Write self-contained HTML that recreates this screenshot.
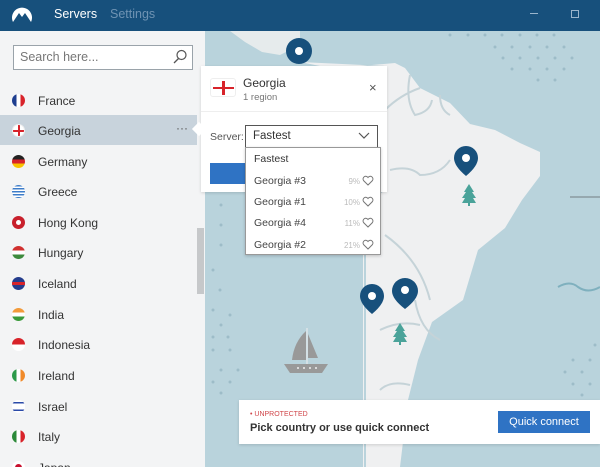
<!DOCTYPE html>
<html><head><meta charset="utf-8"><style>
*{margin:0;padding:0;box-sizing:border-box}
html,body{width:600px;height:467px;overflow:hidden}
body{font-family:"Liberation Sans",sans-serif;background:#b9d3dc;position:relative}
.hdr{position:absolute;left:0;top:0;width:600px;height:31px;background:#17507c}
.side{position:absolute;left:0;top:31px;width:205px;height:436px;background:#f3f4f5}
.search{position:absolute;left:13px;top:45px;width:180px;height:25px;border:1px solid #9aa3aa;background:#fff;font-size:12.5px;color:#777;padding:4px 6px}
.row{position:absolute;left:0;width:197px;height:30px;font-size:12px;color:#333}
.row span{position:absolute;left:38px;top:9px}
.flag{position:absolute;left:12px;top:9px;width:13px;height:13px;border-radius:50%;overflow:hidden}
.sel{background:#c8d3dc}
.abs{position:absolute}
</style></head><body>
<svg class="abs" style="left:205px;top:31px" width="395" height="436" viewBox="205 31 395 436">
<rect x="205" y="31" width="395" height="436" fill="#b9d3dc"/>
<path d="M300 62 L330 68 L360 66 L395 63 L405 68 L420 88 L450 103 L470 124 L495 130 L520 143 L540 152 L540 176 L522 200 L505 228 L478 250 L463 300 L432 322 L418 360 L408 400 L400 467 L363 467 L363 240 L372 200 L385 190 L385 66 Z" fill="#eff0f1"/>
<path d="M230 31 L300 31 L300 45 L280 55 L262 52 L245 42 Z" fill="#e6ebec"/>
<path d="M365 200 L365 467" stroke="#b9d3dc" stroke-width="2"/>
<path d="M385 110 Q400 95 420 88 M410 75 Q405 100 415 115 Q430 112 432 100 M440 95 Q440 110 450 115 M390 170 Q410 165 420 175 Q440 175 450 160 M385 235 Q420 260 430 300 M415 300 Q420 330 440 340 M380 330 Q400 320 420 325 M380 390 Q390 380 410 385" stroke="#c5d3d8" stroke-width="2" fill="none"/>
<g fill="#9dbcc8">
<circle cx="450" cy="35" r="1.5"/><circle cx="468" cy="35" r="1.5"/><circle cx="485" cy="35" r="1.5"/><circle cx="502" cy="35" r="1.5"/><circle cx="520" cy="35" r="1.5"/><circle cx="537" cy="35" r="1.5"/><circle cx="554" cy="35" r="1.5"/>
<circle cx="495" cy="47" r="1.5"/><circle cx="512" cy="47" r="1.5"/><circle cx="530" cy="47" r="1.5"/><circle cx="547" cy="47" r="1.5"/><circle cx="564" cy="47" r="1.5"/>
<circle cx="503" cy="58" r="1.5"/><circle cx="520" cy="58" r="1.5"/><circle cx="538" cy="58" r="1.5"/><circle cx="555" cy="58" r="1.5"/><circle cx="572" cy="58" r="1.5"/>
<circle cx="512" cy="69" r="1.5"/><circle cx="530" cy="69" r="1.5"/><circle cx="547" cy="69" r="1.5"/><circle cx="564" cy="69" r="1.5"/>
<circle cx="538" cy="80" r="1.5"/><circle cx="555" cy="80" r="1.5"/>
<circle cx="213" cy="270" r="1.5"/><circle cx="220" cy="290" r="1.5"/><circle cx="213" cy="310" r="1.5"/><circle cx="221" cy="325" r="1.5"/><circle cx="230" cy="315" r="1.5"/><circle cx="213" cy="337" r="1.5"/><circle cx="228" cy="337" r="1.5"/><circle cx="213" cy="350" r="1.5"/><circle cx="230" cy="350" r="1.5"/><circle cx="221" cy="370" r="1.5"/><circle cx="238" cy="370" r="1.5"/><circle cx="213" cy="382" r="1.5"/><circle cx="230" cy="382" r="1.5"/><circle cx="221" cy="393" r="1.5"/><circle cx="221" cy="205" r="1.5"/><circle cx="221" cy="225" r="1.5"/><circle cx="221" cy="245" r="1.5"/>
<circle cx="573" cy="360" r="1.5"/><circle cx="590" cy="360" r="1.5"/><circle cx="565" cy="372" r="1.5"/><circle cx="582" cy="372" r="1.5"/><circle cx="573" cy="384" r="1.5"/><circle cx="590" cy="384" r="1.5"/><circle cx="582" cy="395" r="1.5"/><circle cx="595" cy="345" r="1.5"/>
</g>
<path d="M558 287 Q570 280 578 287 Q588 294 600 287" stroke="#7fb0be" stroke-width="2" fill="none"/>
<path d="M570 197 L600 197" stroke="#8a9aa0" stroke-width="1.5"/>
<circle cx="299" cy="51" r="13" fill="#17507c"/>
<circle cx="299" cy="51" r="4" fill="#fff"/>
<path d="M466 146 a12 12 0 0 1 12 12 q0 8 -12 18 q-12 -10 -12 -18 a12 12 0 0 1 12 -12z" fill="#17507c"/><circle cx="466" cy="158" r="4" fill="#fff"/>
<path d="M372 284 a12 12 0 0 1 12 12 q0 8 -12 18 q-12 -10 -12 -18 a12 12 0 0 1 12 -12z" fill="#17507c"/><circle cx="372" cy="296" r="4" fill="#fff"/>
<path d="M405 278 a13 13 0 0 1 13 13 q0 8 -13 18 q-13 -10 -13 -18 a13 13 0 0 1 13 -13z" fill="#17507c"/><circle cx="405" cy="290" r="4" fill="#fff"/>
<path d="M469 184 l5 8 h-2 l4 6 h-3 l3 5 h-14 l3 -5 h-3 l4 -6 h-2z M468 203 h2 v3 h-2z" fill="#4aa39a"/>
<path d="M400 323 l5 8 h-2 l4 6 h-3 l3 5 h-14 l3 -5 h-3 l4 -6 h-2z M399 342 h2 v3 h-2z" fill="#4aa39a"/>
<path d="M306 331 L306 360 L292 360 Q294 342 306 331z" fill="#999"/>
<path d="M308 334 L318 358 L308 358z" fill="#999"/>
<path d="M307 328 L307 364" stroke="#eee" stroke-width="1"/>
<path d="M284 364 L328 364 L322 373 L290 373z" fill="#999"/>
<g fill="#eee"><circle cx="298" cy="368" r="1"/><circle cx="304" cy="368" r="1"/><circle cx="310" cy="368" r="1"/><circle cx="316" cy="368" r="1"/></g>
</svg>
<div class="hdr">
<svg class="abs" style="left:11px;top:6px" width="22" height="18" viewBox="0 0 22 18"><path d="M2 16 A10 10 0 1 1 20 16 L14 7 L11 11 L8 7 Z" fill="#fff"/></svg>
<div class="abs" style="left:54px;top:7px;color:#fff;font-size:12.5px">Servers</div>
<div class="abs" style="left:110px;top:7px;color:#6f93b3;font-size:12.5px">Settings</div>
<div class="abs" style="left:530px;top:13px;width:8px;height:1px;background:#9ab5cc"></div>
<div class="abs" style="left:571px;top:10px;width:8px;height:8px;border:1px solid #9ab5cc"></div>
</div>
<div class="side"></div>
<div class="search">Search here...</div>
<svg class="abs" style="left:172px;top:49px" width="16" height="16" viewBox="0 0 16 16"><circle cx="9.5" cy="6" r="4.5" stroke="#555" stroke-width="1.2" fill="none"/><path d="M6.5 9.5 L2 14" stroke="#555" stroke-width="1.3"/></svg>
<div class="row" style="top:85px"><i class="flag" style="background:linear-gradient(90deg,#1e3e8f 33%,#fff 33% 66%,#d8232a 66%)"></i><span>France</span></div>
<div class="row sel" style="top:115px;width:197px"><i class="flag" style="background:#fff;border:1px solid #eee"><b style="position:absolute;left:5px;top:0;width:2px;height:13px;background:#d8232a"></b><b style="position:absolute;left:0;top:5px;width:13px;height:2px;background:#d8232a"></b></i><span>Georgia</span><b style="position:absolute;left:176px;top:6px;font-weight:normal;color:#555">···</b></div>
<div class="row" style="top:146px"><i class="flag" style="background:linear-gradient(#222 33%,#d8232a 33% 66%,#f8c300 66%)"></i><span>Germany</span></div>
<div class="row" style="top:176px"><i class="flag" style="background:repeating-linear-gradient(#3d7cc9 0 1.5px,#fff 1.5px 3px)"></i><span>Greece</span></div>
<div class="row" style="top:207px"><i class="flag" style="background:#c8202c"><b style="position:absolute;left:4px;top:4px;width:5px;height:5px;border-radius:50%;background:#fff"></b></i><span>Hong Kong</span></div>
<div class="row" style="top:237px"><i class="flag" style="background:linear-gradient(#d0302f 33%,#fff 33% 66%,#3d8a3d 66%)"></i><span>Hungary</span></div>
<div class="row" style="top:268px"><i class="flag" style="background:#243c8c"><b style="position:absolute;left:0;top:5px;width:13px;height:3px;background:#d8232a"></b></i><span>Iceland</span></div>
<div class="row" style="top:299px"><i class="flag" style="background:linear-gradient(#f29a3a 33%,#fff 33% 66%,#3a9a3a 66%)"></i><span>India</span></div>
<div class="row" style="top:329px"><i class="flag" style="background:linear-gradient(#d8232a 50%,#fff 50%)"></i><span>Indonesia</span></div>
<div class="row" style="top:360px"><i class="flag" style="background:linear-gradient(90deg,#2d9a4a 33%,#fff 33% 66%,#f08a2a 66%)"></i><span>Ireland</span></div>
<div class="row" style="top:391px"><i class="flag" style="background:linear-gradient(#fff 15%,#2a4aa8 15% 28%,#fff 28% 72%,#2a4aa8 72% 85%,#fff 85%)"></i><span>Israel</span></div>
<div class="row" style="top:421px"><i class="flag" style="background:linear-gradient(90deg,#2d8a3a 33%,#fff 33% 66%,#d8232a 66%)"></i><span>Italy</span></div>
<div class="row" style="top:452px"><i class="flag" style="background:#fff"><b style="position:absolute;left:3px;top:3px;width:7px;height:7px;border-radius:50%;background:#c8102e"></b></i><span>Japan</span></div>
<div class="abs" style="left:197px;top:228px;width:7px;height:66px;background:#c6c8ca"></div>
<div class="abs" style="left:201px;top:66px;width:186px;height:126px;background:#fff;box-shadow:0 1px 3px rgba(0,0,0,.15)"></div>
<div class="abs" style="left:194px;top:124px;width:10px;height:10px;background:#fff;transform:rotate(45deg)"></div>
<div class="abs" style="left:210px;top:78px;width:26px;height:19px;background:#fff;border:1px solid #eee;border-radius:3px"><b style="position:absolute;left:11px;top:2px;width:3px;height:14px;background:#d8232a"></b><b style="position:absolute;left:2px;top:8px;width:21px;height:2px;background:#d8232a"></b></div>
<div class="abs" style="left:243px;top:76px;font-size:12px;color:#333">Georgia</div>
<div class="abs" style="left:243px;top:92px;font-size:9.5px;color:#777">1 region</div>
<div class="abs" style="left:369px;top:80px;font-size:13px;color:#555">×</div>
<div class="abs" style="left:201px;top:111px;width:186px;height:1px;background:#eee"></div>
<div class="abs" style="left:210px;top:131px;font-size:10.5px;color:#555">Server:</div>
<div class="abs" style="left:210px;top:163px;width:40px;height:21px;background:#2f73c4"></div>
<div class="abs" style="left:245px;top:125px;width:133px;height:23px;border:1px solid #555;background:#fff;font-size:11.5px;color:#333;padding:4px 7px">Fastest</div>
<svg class="abs" style="left:358px;top:132px" width="12" height="8"><path d="M1 1 L6 6 L11 1" stroke="#555" fill="none" stroke-width="1.2"/></svg>
<div class="abs" style="left:245px;top:147px;width:136px;height:108px;background:#fff;border:1px solid #999;box-shadow:0 1px 3px rgba(0,0,0,.2)"></div>
<div class="abs" style="left:254px;top:153px;font-size:10.5px;color:#333">Fastest</div>
<div class="abs" style="left:254px;top:175px;font-size:10.5px;color:#444">Georgia #3</div>
<div class="abs" style="left:254px;top:196px;font-size:10.5px;color:#444">Georgia #1</div>
<div class="abs" style="left:254px;top:217px;font-size:10.5px;color:#444">Georgia #4</div>
<div class="abs" style="left:254px;top:239px;font-size:10.5px;color:#444">Georgia #2</div>
<div class="abs" style="left:340px;top:177px;font-size:8px;color:#bbb;width:20px;text-align:right">9%</div>
<div class="abs" style="left:340px;top:198px;font-size:8px;color:#bbb;width:20px;text-align:right">10%</div>
<div class="abs" style="left:340px;top:219px;font-size:8px;color:#bbb;width:20px;text-align:right">11%</div>
<div class="abs" style="left:340px;top:241px;font-size:8px;color:#bbb;width:20px;text-align:right">21%</div>
<svg class="abs" style="left:362px;top:175px" width="12" height="80" viewBox="0 0 12 80"><g fill="none" stroke="#777" stroke-width="1"><path d="M6 10 L1.5 5.5 A2.5 2.5 0 0 1 6 2.5 A2.5 2.5 0 0 1 10.5 5.5 Z"/><path d="M6 31 L1.5 26.5 A2.5 2.5 0 0 1 6 23.5 A2.5 2.5 0 0 1 10.5 26.5 Z"/><path d="M6 52 L1.5 47.5 A2.5 2.5 0 0 1 6 44.5 A2.5 2.5 0 0 1 10.5 47.5 Z"/><path d="M6 74 L1.5 69.5 A2.5 2.5 0 0 1 6 66.5 A2.5 2.5 0 0 1 10.5 69.5 Z"/></g></svg>
<div class="abs" style="left:239px;top:400px;width:361px;height:44px;background:#fff;box-shadow:0 1px 3px rgba(0,0,0,.15)"></div>
<div class="abs" style="left:250px;top:411px;font-size:7px;color:#d0464a">• UNPROTECTED</div>
<div class="abs" style="left:250px;top:422px;font-size:11px;color:#333;font-weight:bold">Pick country or use quick connect</div>
<div class="abs" style="left:498px;top:411px;width:92px;height:22px;background:#2f73c4;color:#fff;font-size:11px;text-align:center;line-height:22px">Quick connect</div>
</body></html>
